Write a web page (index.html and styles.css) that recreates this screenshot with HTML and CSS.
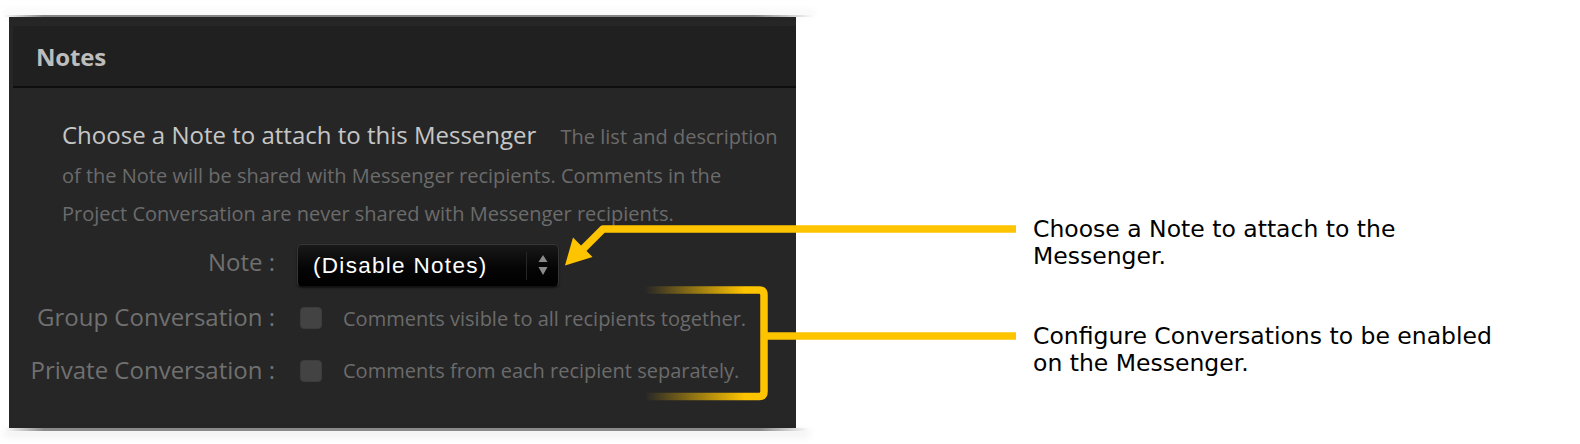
FILE: index.html
```html
<!DOCTYPE html>
<html lang="en">
<head>
<meta charset="utf-8">
<title>Notes</title>
<link rel="stylesheet" href="styles.css">
</head>
<body>
<div class="page">
  <section class="panel">
    <header class="panel-header"><h2 class="panel-title">Notes</h2></header>
    <div class="panel-body">
      <p class="intro"><span class="intro-title">Choose a Note to attach to this Messenger</span> The list and description of the Note will be shared with Messenger recipients. Comments in the Project Conversation are never shared with Messenger recipients.</p>
      <div class="form">
        <span class="form-label form-label-select">Note :</span>
        <div class="form-control">
          <div class="select">
            <span class="select-value">(Disable Notes)</span>
            <span class="select-arrows">
              <svg width="10" height="22" viewBox="0 0 10 22"><path d="M5 0 L9.5 7 H0.5 Z" fill="#8b8b8b"/><path d="M0.5 12 H9.5 L5 20 Z" fill="#8b8b8b"/></svg>
            </span>
          </div>
        </div>
        <span class="form-label">Group Conversation :</span>
        <div class="form-control check-row"><span class="checkbox"></span><span class="check-text">Comments visible to all recipients together.</span></div>
        <span class="form-label">Private Conversation :</span>
        <div class="form-control check-row"><span class="checkbox"></span><span class="check-text">Comments from each recipient separately.</span></div>
      </div>
    </div>
  </section>
  <aside class="callouts">
    <p class="callout">Choose a Note to attach to the<br>Messenger.</p>
    <p class="callout callout-second">Configure Conversations to be enabled<br>on the Messenger.</p>
  </aside>
  <svg class="annotations" width="1580" height="444" viewBox="0 0 1580 444">
    <defs>
      <linearGradient id="fadeTop" gradientUnits="userSpaceOnUse" x1="645" y1="0" x2="745" y2="0">
        <stop offset="0" stop-color="#ffc400" stop-opacity="0"/>
        <stop offset="1" stop-color="#ffc400" stop-opacity="1"/>
      </linearGradient>
    </defs>
    <path d="M1016 229 H603 L581 251" fill="none" stroke="#ffc400" stroke-width="7.5" stroke-linejoin="round"/>
    <path d="M565 265.5 L573 237.5 L592.5 257 Z" fill="#ffc400"/>
    <path d="M645 290 H759 Q764 290 764 295 V391.5 Q764 396.5 759 396.5 H645" fill="none" stroke="url(#fadeTop)" stroke-width="7.5"/>
    <path d="M764 336 H1016" fill="none" stroke="#ffc400" stroke-width="7.5"/>
  </svg>
</div>
</body>
</html>
```
FILE: styles.css
```css
html, body {
  margin: 0;
  padding: 0;
  background: #ffffff;
}

.page {
  position: relative;
  display: flex;
  align-items: flex-start;
  padding: 17px 0 0 9px;
  width: 1580px;
  height: 444px;
  box-sizing: border-box;
  overflow: hidden;
}

.panel {
  position: relative;
  width: 787px;
  background: #262626;
  font-family: "Open Sans", "DejaVu Sans", sans-serif;
  flex: none;
}

.panel::before {
  content: "";
  position: absolute;
  left: -6px;
  right: -19px;
  top: -2px;
  height: 2px;
  background: linear-gradient(90deg, rgba(130,130,130,0) 0, #858585 40px, #858585 calc(100% - 60px), rgba(130,130,130,0) 100%);
  box-shadow: 0 -3px 9px rgba(0,0,0,0.12);
}

.panel::after {
  content: "";
  position: absolute;
  left: -5px;
  right: -14px;
  bottom: -3px;
  height: 3px;
  background: linear-gradient(90deg, rgba(130,130,130,0) 0, #8a8a8a 40px, #8a8a8a calc(100% - 50px), rgba(130,130,130,0) 100%);
  box-shadow: 0 4px 9px rgba(0,0,0,0.14);
}

.panel-header {
  margin: 9px 0 0 4px;
  height: 60px;
  background: #202020;
  border-bottom: 2px solid #0e0e0e;
  display: flex;
  align-items: center;
  padding-left: 23px;
}

.panel-title {
  margin: 0;
  font-size: 24px;
  font-weight: 700;
  color: #bdbdbd;
  letter-spacing: -0.2px;
}

.panel-body {
  padding: 28px 15px 36px 0;
}

.intro {
  margin: 0;
  padding-left: 53px;
  font-size: 20px;
  line-height: 38.5px;
  color: #6b6b6b;
}

.intro-title {
  font-size: 24px;
  color: #c6c6c6;
  margin-right: 19px;
}

.form {
  margin-top: 10.5px;
  display: grid;
  grid-template-columns: 266px 1fr;
  grid-auto-rows: 43px;
  column-gap: 22px;
  row-gap: 9.5px;
  align-items: center;
}

.form-label {
  text-align: right;
  font-size: 24px;
  color: #707070;
  white-space: nowrap;
  padding-bottom: 3px;
}

.form-label-select {
  padding-bottom: 8px;
}

.form-control {
  display: flex;
  align-items: center;
  height: 43px;
}

.select {
  width: 262px;
  height: 43px;
  box-sizing: border-box;
  border-radius: 5px;
  border: 1px solid #363636;
  border-bottom-color: #111;
  background: linear-gradient(#191919, #050505 55%, #000);
  box-shadow: 0 1px 2px rgba(0,0,0,0.6);
  display: flex;
  align-items: center;
}

.select-value {
  flex: 1;
  padding-left: 15px;
  font-family: "Liberation Sans", Arial, sans-serif;
  font-size: 22.5px;
  letter-spacing: 1.3px;
  color: #ffffff;
}

.select-arrows {
  width: 31px;
  height: 28px;
  border-left: 1px solid #262626;
  display: flex;
  align-items: center;
  justify-content: center;
}

.check-row {
  padding-left: 3px;
}

.checkbox {
  width: 22px;
  height: 22px;
  box-sizing: border-box;
  border-radius: 4px;
  background: #434343;
  border: 1px solid #3c3c3c;
  flex: none;
}

.check-text {
  margin-left: 21px;
  font-size: 20px;
  color: #6b6b6b;
  white-space: nowrap;
}

.callouts {
  margin-left: 237px;
  margin-top: 198.5px;
  font-family: "DejaVu Sans", Verdana, sans-serif;
  font-size: 23.5px;
  line-height: 27.5px;
  color: #000000;
}

.callout {
  margin: 0;
  white-space: nowrap;
}

.callout-second {
  margin-top: 52px;
}

.annotations {
  position: absolute;
  left: 0;
  top: 0;
  pointer-events: none;
}
```
